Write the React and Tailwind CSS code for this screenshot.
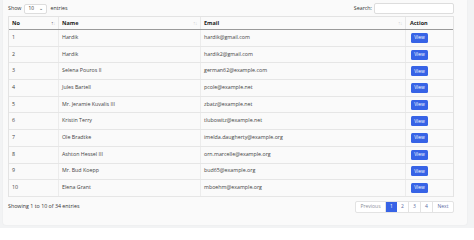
import React from "react";

const rows = [
  ["1", "Hardik", "hardik@gmail.com"],
  ["2", "Hardik", "hardik2@gmail.com"],
  ["3", "Selena Pouros II", "german62@example.com"],
  ["4", "Jules Bartell", "pcole@example.net"],
  ["5", "Mr. Jeramie Kuvalis III", "zbatz@example.net"],
  ["6", "Kristin Terry", "tlubowitz@example.net"],
  ["7", "Ole Bradtke", "imelda.daugherty@example.org"],
  ["8", "Ashton Hessel III", "orn.marcelle@example.org"],
  ["9", "Mr. Bud Koepp", "bud65@example.org"],
  ["10", "Elena Grant", "mboehm@example.org"],
];

function SortIcon({ active }) {
  return (
    <span className="flex items-center text-[5px] leading-none tracking-[-0.5px]">
      <span className={active ? "text-[#666]" : "text-[#d0d0d0]"}>↑</span>
      <span className="text-[#d0d0d0]">↓</span>
    </span>
  );
}

export default function App() {
  return (
    <div
      className="w-[474px] h-[228px] bg-[#f2f3f4] overflow-hidden"
      style={{ fontFamily: '"Open Sans", "Noto Sans", sans-serif' }}
    >
      <div className="ml-[3px] w-[464px] h-[225px] bg-[#fafafa] rounded-b-[3px] shadow-[0_0_2px_rgba(0,0,0,0.06)] pl-[5px] pr-[13px] pt-[3px] text-[5.3px] text-[#333]">
        <div className="flex items-center justify-between h-[11px]">
          <div className="flex items-center gap-[3px]">
            <span>Show</span>
            <div className="flex items-center justify-between w-[23px] h-[10px] border border-[#ddd] rounded-[2px] bg-white px-[3px] text-[4.8px]">
              <span>10</span>
              <span className="text-[5px]">⌄</span>
            </div>
            <span>entries</span>
          </div>
          <div className="flex items-center gap-[2px]">
            <span>Search:</span>
            <div className="w-[80px] h-[11px] border border-[#ddd] rounded-[2px] bg-white" />
          </div>
        </div>

        <div className="mt-[2px] w-[446px] border-l border-r border-[#e3e3e3]">
          <div className="flex h-[14px] items-center font-bold text-[#222] text-[5.5px] border-t border-[#e3e3e3] border-b-[1.5px] border-b-[#9a9a9a]">
            <div className="w-[50px] h-full flex items-center justify-between px-[3px] border-r border-[#e8e8e8]">
              <span>No</span>
              <SortIcon active />
            </div>
            <div className="w-[142px] h-full flex items-center justify-between px-[3px] border-r border-[#e8e8e8]">
              <span>Name</span>
              <SortIcon />
            </div>
            <div className="w-[205px] h-full flex items-center justify-between px-[3px] border-r border-[#e8e8e8]">
              <span>Email</span>
              <SortIcon />
            </div>
            <div className="flex-1 h-full flex items-center px-[4px]">
              <span>Action</span>
            </div>
          </div>
          {rows.map((r) => (
            <div
              key={r[0]}
              className="flex h-[16.7px] items-center border-b border-[#e6e6e6] text-[#444]"
            >
              <div className="w-[50px] h-full flex items-center px-[3px] border-r border-[#ececec]">
                {r[0]}
              </div>
              <div className="w-[142px] h-full flex items-center px-[3px] border-r border-[#ececec]">
                {r[1]}
              </div>
              <div className="w-[205px] h-full flex items-center px-[3px] border-r border-[#ececec]">
                {r[2]}
              </div>
              <div className="flex-1 h-full flex items-center px-[5px]">
                <div className="w-[17px] h-[10px] bg-[#3763e6] rounded-[1.5px] text-white text-[4.8px] flex items-center justify-center">
                  View
                </div>
              </div>
            </div>
          ))}
        </div>

        <div className="mt-[4px] w-[446px] flex items-center justify-between">
          <span className="text-[#333]">Showing 1 to 10 of 34 entries</span>
          <div className="flex h-[12px] items-stretch border border-[#e3e3e3] rounded-[2px] bg-white text-[#5a6aa0] text-[5px]">
            <div className="w-[30px] flex items-center justify-center text-[#8a8f9a] border-r border-[#e3e3e3]">
              Previous
            </div>
            <div className="w-[11px] flex items-center justify-center bg-[#3763e6] text-white">
              1
            </div>
            <div className="w-[12px] flex items-center justify-center border-r border-[#e3e3e3]">
              2
            </div>
            <div className="w-[12px] flex items-center justify-center border-r border-[#e3e3e3]">
              3
            </div>
            <div className="w-[12px] flex items-center justify-center border-r border-[#e3e3e3]">
              4
            </div>
            <div className="w-[20px] flex items-center justify-center">Next</div>
          </div>
        </div>
      </div>
    </div>
  );
}
